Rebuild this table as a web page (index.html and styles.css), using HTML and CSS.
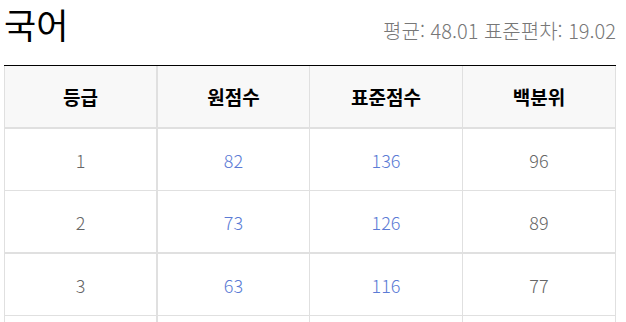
FILE: index.html
```html
<!DOCTYPE html>
<html lang="ko">
<head>
<meta charset="utf-8">
<link rel="stylesheet" href="styles.css">
</head>
<body>
<div class="page">
  <div class="head">
    <h1 class="title">국어</h1>
    <div class="stats">평균: 48.01 표준편차: 19.02</div>
  </div>
  <div class="table">
    <div class="row hdr">
      <div class="cell c1">등급</div>
      <div class="cell">원점수</div>
      <div class="cell">표준점수</div>
      <div class="cell">백분위</div>
    </div>
    <div class="row">
      <div class="cell c1">1</div>
      <div class="cell blue">82</div>
      <div class="cell blue">136</div>
      <div class="cell">96</div>
    </div>
    <div class="row thick">
      <div class="cell c1">2</div>
      <div class="cell blue">73</div>
      <div class="cell blue">126</div>
      <div class="cell">89</div>
    </div>
    <div class="row">
      <div class="cell c1">3</div>
      <div class="cell blue">63</div>
      <div class="cell blue">116</div>
      <div class="cell">77</div>
    </div>
    <div class="row">
      <div class="cell c1">4</div>
      <div class="cell blue">53</div>
      <div class="cell blue">106</div>
      <div class="cell">60</div>
    </div>
  </div>
</div>
</body>
</html>
```
FILE: styles.css
```css
html, body {
  margin: 0;
  padding: 0;
  background: #fff;
}
body {
  font-family: "Noto Sans CJK KR", "Noto Sans", sans-serif;
}
.page {
  padding: 0 0 0 4px;
  width: 612px;
}
.head {
  height: 65px;
  display: flex;
  justify-content: space-between;
  align-items: baseline;
}
.title {
  margin: 6px 0 0 0;
  font-size: 35px;
  line-height: 1;
  font-weight: 400;
  color: #000;
}
.stats {
  font-size: 20px;
  line-height: 1;
  color: #777;
  font-weight: 300;
}
.table {
  border-top: 1px solid #000;
}
.row {
  display: grid;
  grid-template-columns: 154px 152px 153px 153px;
  border-bottom: 1px solid #e0e0e0;
}
.row.hdr {
  background: #f8f8f8;
  border-bottom: 2px solid #e0e0e0;
}
.row.thick {
  border-bottom: 2px solid #e0e0e0;
}
.cell {
  box-sizing: border-box;
  height: 61px;
  display: flex;
  align-items: center;
  justify-content: center;
  border-right: 1px solid #e0e0e0;
  font-size: 18px;
  font-weight: 300;
  color: #666;
}
.cell.c1 {
  border-left: 1px solid #e0e0e0;
  border-right: 2px solid #e0e0e0;
}
.hdr .cell {
  font-size: 19px;
  font-weight: 700;
  color: #000;
}
.cell.blue {
  color: #5b7bd5;
}
```
